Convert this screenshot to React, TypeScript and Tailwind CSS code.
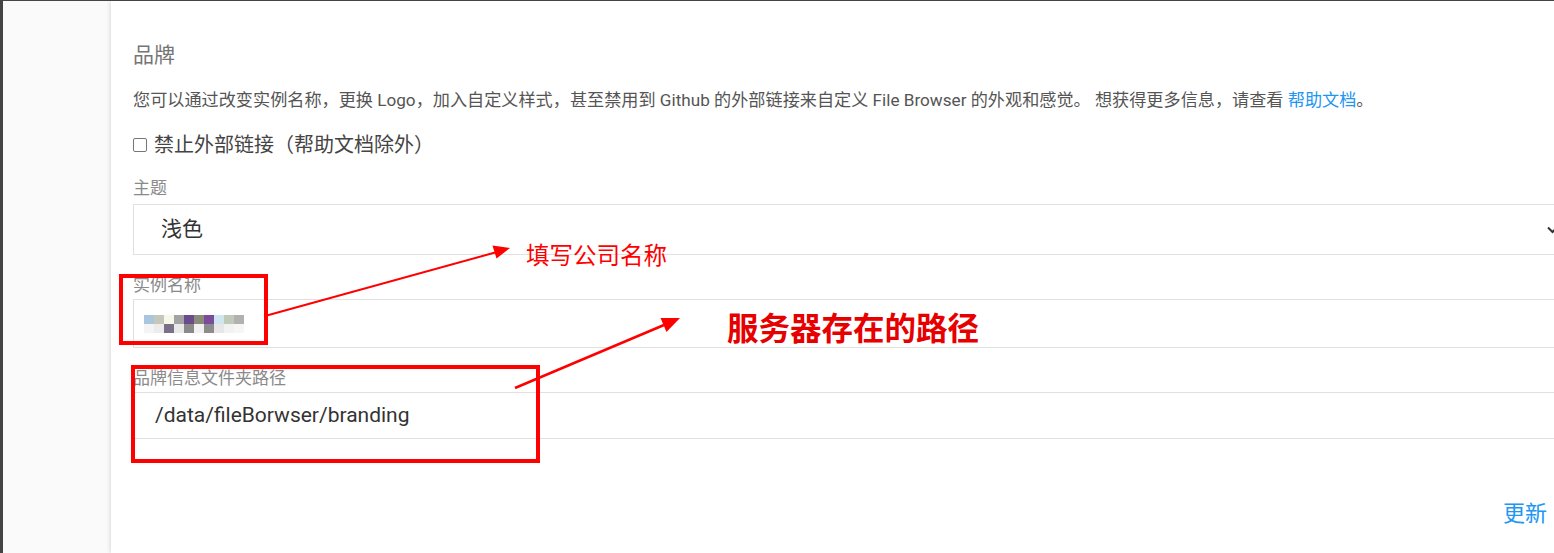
import React from "react";

// Pixelated placeholder for the instance name field
const mosaicTop = ["#aac6de", "#c6c7bb", "#f7f7ea", "#a3a3a3", "#6b4b8c", "#8b8b79", "#7b4b9c", "#d0e6ef", "#c1c9b8", "#b1b1b1"];
const mosaicBottom = ["#f4f4f4", "#ececec", "#7a7189", "#e9e9e9", "#8a8a8a", "#f1f1f1", "#8c8c8c", "#e7e7e7", "#f2f2f2", "#f6f6f6"];

const Mosaic = () => (
  <div className="flex flex-col">
    <div className="flex">
      {mosaicTop.map((c, i) => (
        <span key={i} className="block h-[9px] w-[10px]" style={{ backgroundColor: c }} />
      ))}
    </div>
    <div className="flex">
      {mosaicBottom.map((c, i) => (
        <span key={i} className="block h-[9px] w-[10px]" style={{ backgroundColor: c }} />
      ))}
    </div>
  </div>
);

const Label = ({ children }: { children: React.ReactNode }) => (
  <p className="text-[17px] leading-[24px] text-[#8a8a8a]">{children}</p>
);

const App = () => {
  return (
    <div className="relative h-[553px] w-[1554px] overflow-hidden border-t border-[#444] bg-[#fafafa] font-['Roboto','Noto_Sans_CJK_SC',sans-serif]">
      <div className="flex h-full">
        {/* dark window edge */}
        <div className="w-[3px] shrink-0 bg-[#444]" />
        <div className="w-[108px] shrink-0" />

        {/* ================= BRANDING CARD ================= */}
        <div className="w-[1484px] shrink-0 bg-white pl-[22px] pr-[22px] pt-[40px] shadow-[0_0_5px_rgba(0,0,0,0.18)]">
          <h2 className="text-[21px] leading-[28px] text-[#757575]">品牌</h2>

          <p className="mt-[19px] whitespace-nowrap text-[17.15px] leading-[24px] text-[#555]">
            您可以通过改变实例名称，更换 Logo，加入自定义样式，甚至禁用到 Github 的外部链接来自定义 File Browser 的外观和感觉。 想获得更多信息，请查看{" "}
            <a className="text-[#2196f3]">帮助文档</a>。
          </p>

          <label className="mt-[19px] flex items-center gap-[7px] text-[20px] leading-[28px] text-[#444]">
            <span className="block h-[14px] w-[14px] rounded-[2px] border border-[#767676] bg-white" />
            禁止外部链接（帮助文档除外）
          </label>

          {/* Theme */}
          <div className="mt-[17px]">
            <Label>主题</Label>
            <div className="mt-[4px] flex h-[51px] items-center justify-between border border-[#e0e0e0] pl-[27px] pr-[14px]">
              <span className="text-[21px] text-[#333]">浅色</span>
              <svg width="11" height="8" viewBox="0 0 11 8">
                <path d="M1 1.5 L5.5 6 L10 1.5" fill="none" stroke="#333" strokeWidth="2" />
              </svg>
            </div>
          </div>

          {/* Instance name */}
          <div className="mt-[18px]">
            <Label>实例名称</Label>
            <div className="mt-[2px] flex h-[49px] items-center border border-[#e0e0e0] pl-[10px]">
              <Mosaic />
            </div>
          </div>

          {/* Branding directory */}
          <div className="mt-[18px]">
            <Label>品牌信息文件夹路径</Label>
            <div className="mt-[2px] flex h-[47px] items-center border border-[#e0e0e0] pl-[21px]">
              <span className="text-[21px] text-[#333]">/data/fileBorwser/branding</span>
            </div>
          </div>

          <div className="mt-[61px] flex justify-end">
            <button className="pr-[26px] text-[22px] leading-[28px] text-[#2196f3]">更新</button>
          </div>
        </div>
      </div>

      {/* ================= RED NOTES ================= */}
      <svg className="pointer-events-none absolute left-0 top-[-1px]" width="1554" height="553">
        <rect x="121" y="276" width="145" height="67" fill="none" stroke="#ff0000" strokeWidth="4" />
        <rect x="133" y="367" width="405" height="94" fill="none" stroke="#ff0000" strokeWidth="4" />
        <line x1="265" y1="316" x2="497" y2="252" stroke="#ff0000" strokeWidth="2" />
        <polygon points="510,248 496.5,258.5 492.5,245.5" fill="#ff0000" />
        <line x1="515" y1="388" x2="664" y2="325" stroke="#ff0000" strokeWidth="2.5" />
        <polygon points="680,318 666.5,332 660.5,318" fill="#ff0000" />
      </svg>
      <span className="absolute left-[526px] top-[240px] whitespace-nowrap font-['Liberation_Serif','Noto_Sans_CJK_SC',serif] text-[23.5px] leading-[30px] text-[#ff0000]">
        填写公司名称
      </span>
      <span className="absolute left-[727px] top-[309px] whitespace-nowrap font-['Liberation_Serif','Noto_Sans_CJK_SC',serif] text-[31.5px] font-bold leading-[40px] text-[#e60000]">
        服务器存在的路径
      </span>
    </div>
  );
};

export default App;
